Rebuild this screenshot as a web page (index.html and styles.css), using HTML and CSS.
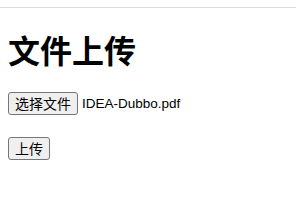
FILE: index.html
```html
<!DOCTYPE html>
<html lang="zh-CN">
<head>
  <meta charset="UTF-8">
  <meta name="viewport" content="width=device-width, initial-scale=1.0">
  <title>文件上传</title>
  <link rel="stylesheet" href="styles.css">
</head>
<body>
  <div class="rule"></div>
  <div class="page">
    <h1 class="title">文件上传</h1>
    <form class="upload-form">
      <div class="file-row">
        <button type="button" class="btn">选择文件</button>
        <span class="file-name">IDEA-Dubbo.pdf</span>
      </div>
      <div>
        <button type="submit" class="btn">上传</button>
      </div>
    </form>
  </div>
</body>
</html>
```

FILE: styles.css
```css
/* Basic page */
body {
  margin: 0;
  font-family: "Liberation Sans", "Noto Sans CJK SC", sans-serif;
  color: #000;
  background: #fff;
}

.rule {
  height: 7px;
  border-bottom: 1px solid #dcdcdc;
}

.page {
  padding: 0 8px;
}

.title {
  margin: 0;
  padding-top: 23px;
  font-family: "Noto Sans CJK SC", sans-serif;
  font-size: 32px;
  font-weight: bold;
  line-height: 37px;
}

.upload-form {
  display: flex;
  flex-direction: column;
  gap: 22px;
  margin-top: 24px;
}

.file-row {
  display: flex;
  align-items: center;
  gap: 4px;
}

.btn {
  height: 23px;
  padding: 0 6px;
  border: 1px solid #767676;
  border-radius: 3px;
  background: #efefef;
  font-family: "Noto Sans CJK SC", sans-serif;
  font-size: 14px;
  line-height: 21px;
  color: #000;
}

.file-name {
  font-size: 13.5px;
}
```
